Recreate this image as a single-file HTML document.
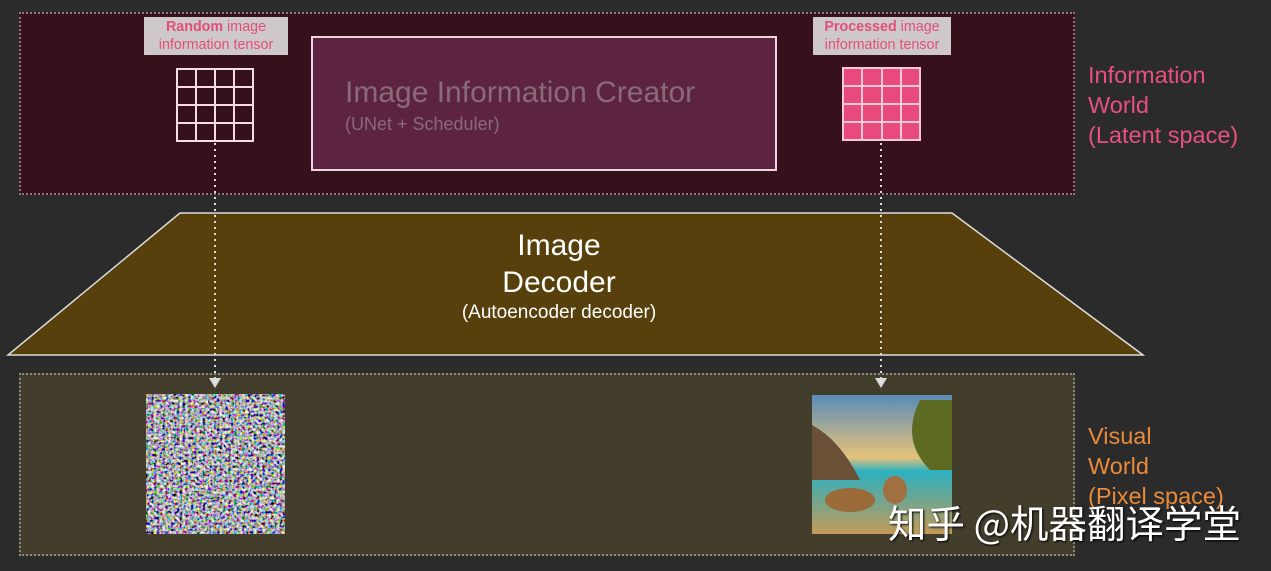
<!DOCTYPE html>
<html><head><meta charset="utf-8"><style>
body{margin:0;width:1271px;height:571px;background:#2b2b2b;position:relative;overflow:hidden;font-family:"Liberation Sans","Noto Sans CJK SC",sans-serif}
.a{position:absolute}
.box1{left:19px;top:12px;width:1056px;height:183px;background:#36111c;border:2px dotted #8a7a80;box-sizing:border-box}
.box2{left:19px;top:373px;width:1056px;height:183px;background:#433d2c;border:2px dotted #8a8a80;box-sizing:border-box}
.lbl{background:#cfc8ca;color:#e0507a;font-size:14.3px;line-height:18px;text-align:center;padding:1px 0}
.grid{display:grid;grid-template-columns:repeat(4,1fr);gap:2px;padding:2px;box-sizing:border-box}
</style></head><body>
<div class="a box1"></div>
<div class="a box2"></div>
<div class="a lbl" style="left:144px;top:17px;width:144px"><b>Random</b> image<br>information tensor</div>
<div class="a lbl" style="left:813px;top:17px;width:138px"><b>Processed</b> image<br>information tensor</div>
<div class="a grid" style="left:176px;top:68px;width:78px;height:74px;background:#f3dce2">
<div style="background:#36111c"></div><div style="background:#36111c"></div><div style="background:#36111c"></div><div style="background:#36111c"></div><div style="background:#36111c"></div><div style="background:#36111c"></div><div style="background:#36111c"></div><div style="background:#36111c"></div><div style="background:#36111c"></div><div style="background:#36111c"></div><div style="background:#36111c"></div><div style="background:#36111c"></div><div style="background:#36111c"></div><div style="background:#36111c"></div><div style="background:#36111c"></div><div style="background:#36111c"></div></div>
<div class="a grid" style="left:842px;top:67px;width:79px;height:74px;background:#f7c9d6">
<div style="background:#e94a7c"></div><div style="background:#e94a7c"></div><div style="background:#e94a7c"></div><div style="background:#e94a7c"></div><div style="background:#e94a7c"></div><div style="background:#e94a7c"></div><div style="background:#e94a7c"></div><div style="background:#e94a7c"></div><div style="background:#e94a7c"></div><div style="background:#e94a7c"></div><div style="background:#e94a7c"></div><div style="background:#e94a7c"></div><div style="background:#e94a7c"></div><div style="background:#e94a7c"></div><div style="background:#e94a7c"></div><div style="background:#e94a7c"></div></div>
<div class="a" style="left:311px;top:36px;width:466px;height:135px;background:#5c2440;border:2px solid #e8d8de;box-sizing:border-box"></div>
<div class="a" style="left:345px;top:76px;font-size:30px;color:#8a6a78">Image Information Creator</div>
<div class="a" style="left:345px;top:114px;font-size:18px;color:#8a6a78">(UNet + Scheduler)</div>
<div class="a" style="left:1088px;top:60px;font-size:23.5px;line-height:30px;color:#e8507e">Information<br>World<br>(Latent space)</div>
<svg class="a" style="left:0;top:0" width="1271" height="571">
<polygon points="180,213 952,213 1143,355 8,355" fill="#57400b" stroke="#ddd" stroke-width="1.5"/>
<line x1="215" y1="143" x2="215" y2="380" stroke="#ddd" stroke-width="2" stroke-dasharray="2 4"/>
<line x1="881" y1="143" x2="881" y2="380" stroke="#ddd" stroke-width="2" stroke-dasharray="2 4"/>
<polygon points="209,378 221,378 215,388" fill="#ddd"/>
<polygon points="875,378 887,378 881,388" fill="#ddd"/>
<filter id="n" x="0" y="0" width="1" height="1" filterUnits="objectBoundingBox"><feTurbulence type="fractalNoise" baseFrequency="0.35" numOctaves="2" seed="3"/><feColorMatrix type="matrix" values="2.2 0.6 0 0 -1.0  0.6 2.2 0 0 -1.0  0.3 0.3 2.2 0 -0.95  0 0 0 0 1"/></filter>
<rect x="146" y="394" width="139" height="140" filter="url(#n)"/>
<defs><linearGradient id="sky" x1="0" y1="0" x2="0" y2="1"><stop offset="0" stop-color="#5a8cb8"/><stop offset=".45" stop-color="#e6c27a"/><stop offset=".55" stop-color="#2bb0c0"/><stop offset="1" stop-color="#c49a58"/></linearGradient></defs>
<rect x="812" y="395" width="140" height="139" fill="url(#sky)"/>
<path d="M812 425 Q840 440 860 480 L812 480Z" fill="#6b5038"/>
<path d="M920 400 Q900 440 930 470 L952 470 L952 400Z" fill="#5c6a22"/>
<ellipse cx="850" cy="500" rx="25" ry="12" fill="#9a6a38"/>
<ellipse cx="895" cy="490" rx="12" ry="14" fill="#a07040"/>
</svg>
<div class="a" style="left:0;width:1118px;top:227px;text-align:center;font-size:30px;line-height:37px;color:#fff">Image<br>Decoder</div>
<div class="a" style="left:0;width:1118px;top:302px;text-align:center;font-size:19px;color:#fff">(Autoencoder decoder)</div>
<div class="a" style="left:1088px;top:421px;font-size:23.5px;line-height:30px;color:#e98a3a">Visual<br>World<br>(Pixel space)</div>
<div class="a" style="left:888px;top:494px;font-size:38.5px;color:#fff;text-shadow:1px 1px 2px #000;font-family:'Noto Sans CJK SC',sans-serif">知乎 @机器翻译学堂</div>
</body></html>
